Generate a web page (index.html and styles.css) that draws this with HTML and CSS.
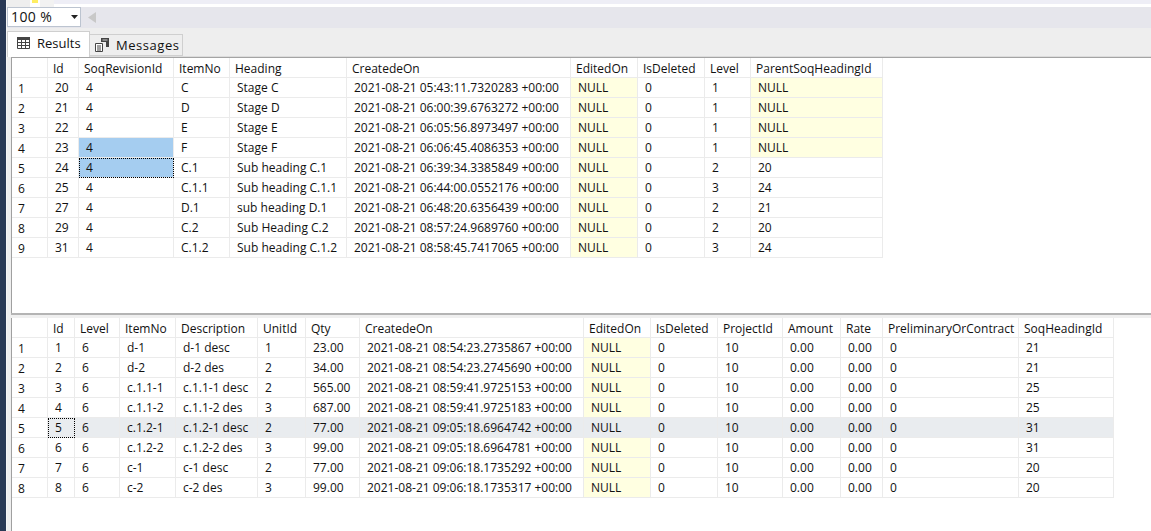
FILE: index.html
```html
<!DOCTYPE html>
<html lang="en">
<head>
  <meta charset="UTF-8">
  <title>Results</title>
  <link rel="stylesheet" href="styles.css">
</head>
<body>
  <div class="side"></div>
  <div class="main">
    <div class="editor-edge">
      <div class="margin-mark"><span class="change-mark"></span></div>
      <div class="margin-gap"></div>
      <div class="editor-text"></div>
    </div>
    <div class="toolbar">
      <div class="zoom-combo">
        <span>100 %</span>
        <svg class="combo-arrow" width="7" height="4" viewBox="0 0 7 4"><path d="M0 0h7L3.500 4z" fill="#222"/></svg>
      </div>
      <svg class="scroll-left" width="8" height="11" viewBox="0 0 8 11"><path d="M8 0v11L0 5.500z" fill="#c8c8c8"/></svg>
    </div>
    <div class="tabs">
      <div class="tab tab-active">
        <svg width="13" height="12" viewBox="0 0 13 12"><path d="M.5.500h12v11H.500z" fill="#fff" stroke="#444"/><path d="M0 0h13v3H0z" fill="#444"/><path d="M.500 5.500h12M.500 8.500h12M4.500 3v8M8.500 3v8" fill="none" stroke="#444"/></svg>
        Results
      </div>
      <div class="tab tab-messages">
        <svg width="15" height="14" viewBox="0 0 15 14"><path d="M6 0h8v9h-3V4H6z" fill="#444"/><path d="M7.500 2h5" stroke="#ccc"/><path d="M.5 5.500h7v8h-7z" fill="#fff" stroke="#444"/><path d="M2 8h4M2 10h4M2 12h4" stroke="#444"/></svg>
        <span>Messages</span>
      </div>
    </div>
    <div class="pane pane-top">
      <table class="grid">
        <colgroup>
          <col class="w36"><col class="w31"><col class="w95"><col class="w56"><col class="w117"><col class="w224"><col class="w67"><col class="w67"><col class="w46"><col class="w132">
        </colgroup>
        <thead>
          <tr><th></th><th>Id</th><th>SoqRevisionId</th><th>ItemNo</th><th>Heading</th><th>CreatedeOn</th><th>EditedOn</th><th>IsDeleted</th><th>Level</th><th>ParentSoqHeadingId</th></tr>
        </thead>
        <tbody>
          <tr><td class="num">1</td><td>20</td><td>4</td><td>C</td><td>Stage C</td><td>2021-08-21 05:43:11.7320283 +00:00</td><td class="null">NULL</td><td>0</td><td>1</td><td class="null">NULL</td></tr>
          <tr><td class="num">2</td><td>21</td><td>4</td><td>D</td><td>Stage D</td><td>2021-08-21 06:00:39.6763272 +00:00</td><td class="null">NULL</td><td>0</td><td>1</td><td class="null">NULL</td></tr>
          <tr><td class="num">3</td><td>22</td><td>4</td><td>E</td><td>Stage E</td><td>2021-08-21 06:05:56.8973497 +00:00</td><td class="null">NULL</td><td>0</td><td>1</td><td class="null">NULL</td></tr>
          <tr><td class="num">4</td><td>23</td><td class="picked">4</td><td>F</td><td>Stage F</td><td>2021-08-21 06:06:45.4086353 +00:00</td><td class="null">NULL</td><td>0</td><td>1</td><td class="null">NULL</td></tr>
          <tr><td class="num">5</td><td>24</td><td class="picked focus">4</td><td>C.1</td><td>Sub heading C.1</td><td>2021-08-21 06:39:34.3385849 +00:00</td><td class="null">NULL</td><td>0</td><td>2</td><td>20</td></tr>
          <tr><td class="num">6</td><td>25</td><td>4</td><td>C.1.1</td><td>Sub heading C.1.1</td><td>2021-08-21 06:44:00.0552176 +00:00</td><td class="null">NULL</td><td>0</td><td>3</td><td>24</td></tr>
          <tr><td class="num">7</td><td>27</td><td>4</td><td>D.1</td><td>sub heading D.1</td><td>2021-08-21 06:48:20.6356439 +00:00</td><td class="null">NULL</td><td>0</td><td>2</td><td>21</td></tr>
          <tr><td class="num">8</td><td>29</td><td>4</td><td>C.2</td><td>Sub Heading C.2</td><td>2021-08-21 08:57:24.9689760 +00:00</td><td class="null">NULL</td><td>0</td><td>2</td><td>20</td></tr>
          <tr><td class="num">9</td><td>31</td><td>4</td><td>C.1.2</td><td>Sub heading C.1.2</td><td>2021-08-21 08:58:45.7417065 +00:00</td><td class="null">NULL</td><td>0</td><td>3</td><td>24</td></tr>
        </tbody>
      </table>
    </div>
    <div class="splitter"></div>
    <div class="pane pane-bottom">
      <table class="grid">
        <colgroup>
          <col class="w36"><col class="w27"><col class="w45"><col class="w56"><col class="w82"><col class="w48"><col class="w54"><col class="w224"><col class="w67"><col class="w67"><col class="w65"><col class="w58"><col class="w42"><col class="w136"><col class="w95">
        </colgroup>
        <thead>
          <tr><th></th><th>Id</th><th>Level</th><th>ItemNo</th><th>Description</th><th>UnitId</th><th>Qty</th><th>CreatedeOn</th><th>EditedOn</th><th>IsDeleted</th><th>ProjectId</th><th>Amount</th><th>Rate</th><th>PreliminaryOrContract</th><th>SoqHeadingId</th></tr>
        </thead>
        <tbody>
          <tr><td class="num">1</td><td>1</td><td>6</td><td>d-1</td><td>d-1 desc</td><td>1</td><td>23.00</td><td>2021-08-21 08:54:23.2735867 +00:00</td><td class="null">NULL</td><td>0</td><td>10</td><td>0.00</td><td>0.00</td><td>0</td><td>21</td></tr>
          <tr><td class="num">2</td><td>2</td><td>6</td><td>d-2</td><td>d-2 des</td><td>2</td><td>34.00</td><td>2021-08-21 08:54:23.2745690 +00:00</td><td class="null">NULL</td><td>0</td><td>10</td><td>0.00</td><td>0.00</td><td>0</td><td>21</td></tr>
          <tr><td class="num">3</td><td>3</td><td>6</td><td>c.1.1-1</td><td>c.1.1-1 desc</td><td>2</td><td>565.00</td><td>2021-08-21 08:59:41.9725153 +00:00</td><td class="null">NULL</td><td>0</td><td>10</td><td>0.00</td><td>0.00</td><td>0</td><td>25</td></tr>
          <tr><td class="num">4</td><td>4</td><td>6</td><td>c.1.1-2</td><td>c.1.1-2 des</td><td>3</td><td>687.00</td><td>2021-08-21 08:59:41.9725183 +00:00</td><td class="null">NULL</td><td>0</td><td>10</td><td>0.00</td><td>0.00</td><td>0</td><td>25</td></tr>
          <tr class="current"><td class="num">5</td><td class="focus">5</td><td>6</td><td>c.1.2-1</td><td>c.1.2-1 desc</td><td>2</td><td>77.00</td><td>2021-08-21 09:05:18.6964742 +00:00</td><td>NULL</td><td>0</td><td>10</td><td>0.00</td><td>0.00</td><td>0</td><td>31</td></tr>
          <tr><td class="num">6</td><td>6</td><td>6</td><td>c.1.2-2</td><td>c.1.2-2 des</td><td>3</td><td>99.00</td><td>2021-08-21 09:05:18.6964781 +00:00</td><td class="null">NULL</td><td>0</td><td>10</td><td>0.00</td><td>0.00</td><td>0</td><td>31</td></tr>
          <tr><td class="num">7</td><td>7</td><td>6</td><td>c-1</td><td>c-1 desc</td><td>2</td><td>77.00</td><td>2021-08-21 09:06:18.1735292 +00:00</td><td class="null">NULL</td><td>0</td><td>10</td><td>0.00</td><td>0.00</td><td>0</td><td>20</td></tr>
          <tr><td class="num">8</td><td>8</td><td>6</td><td>c-2</td><td>c-2 des</td><td>3</td><td>99.00</td><td>2021-08-21 09:06:18.1735317 +00:00</td><td class="null">NULL</td><td>0</td><td>10</td><td>0.00</td><td>0.00</td><td>0</td><td>20</td></tr>
        </tbody>
      </table>
    </div>
  </div>
</body>
</html>
```
FILE: styles.css
```css
html, body {
  height: 100%;
}
body {
  margin: 0;
  display: flex;
  overflow: hidden;
  background: #eeeeee;
  color: #111;
  font-family: "Open Sans", "Noto Sans", sans-serif;
  font-size: 12px;
  line-height: 16px;
}
.side {
  width: 6px;
  flex: none;
  background: #293955;
  border-right: 1px solid #f5f5f5;
}
.main {
  flex: 1;
  min-width: 0;
  display: flex;
  flex-direction: column;
  padding-left: 4px;
}
.editor-edge {
  height: 7px;
  flex: none;
  display: flex;
  margin-left: -4px;
  padding-left: 23px;
}
.margin-mark {
  width: 8px;
  padding-left: 2px;
  background: #fff;
}
.change-mark {
  display: block;
  width: 6px;
  height: 3px;
  background: #ffee62;
}
.margin-gap {
  width: 14px;
  background: #f2f2f2;
}
.editor-text {
  flex: 1;
  background: #fff;
  box-shadow: inset 0 4px 0 #eeeef6;
}
.toolbar {
  height: 21px;
  flex: none;
  display: flex;
  align-items: flex-start;
  gap: 7px;
  margin-left: -4px;
  background: #e6e6ec;
}
.scroll-left {
  margin-top: 5px;
}
.zoom-combo {
  width: 74px;
  height: 20px;
  display: flex;
  align-items: center;
  justify-content: space-between;
  padding: 0 2px 0 3px;
  box-sizing: border-box;
  background: #fff;
  border: 1px solid #bcc4d0;
  font-size: 14px;
  letter-spacing: .4px;
}
.tabs {
  height: 29px;
  flex: none;
  box-sizing: border-box;
  display: flex;
  align-items: flex-end;
  margin-left: -4px;
  border-bottom: 1px solid #dcdcdc;
}
.tab {
  height: 22px;
  display: flex;
  align-items: center;
  gap: 6px;
  box-sizing: border-box;
  border: 1px solid #cfcfcf;
  border-left: none;
  font-size: 13px;
}
.tab-active {
  height: 26px;
  width: 83px;
  padding: 0 0 3px 9px;
  gap: 7px;
  margin-bottom: -1px;
  background: #fff;
  border-left: 1px solid #cfcfcf;
  border-bottom: none;
  position: relative;
}
.tab-messages {
  width: 93px;
  padding-left: 5px;
}
.tab-messages span {
  letter-spacing: .55px;
}
.pane {
  background: #fff;
  border-left: 1px solid #a0a0a0;
}
.pane-top {
  height: 256px;
  flex: none;
  box-sizing: border-box;
  border-top: 1px solid #a4a4a4;
}
.splitter {
  height: 5px;
  flex: none;
  box-sizing: border-box;
  background: #efefef;
  border-top: 2px solid #b4b4b4;
}
.pane-bottom {
  flex: 1;
}
.grid {
  border-collapse: separate;
  border-spacing: 0;
  table-layout: fixed;
  width: 0;
}
.grid th,
.grid td {
  height: 20px;
  padding: 0 0 0 5px;
  box-sizing: border-box;
  border-right: 1px solid #ebebeb;
  border-bottom: 1px solid #ebebeb;
  font-weight: 400;
  text-align: left;
  white-space: nowrap;
  overflow: hidden;
}
.grid th {
  padding-top: 2px;
}
.grid td {
  padding-left: 7px;
}
.grid td.num {
  padding: 2px 0 0 6px;
}
.null {
  background: #ffffe1;
}
.picked {
  background: #a5cdf0;
}
.focus {
  outline: 1px dotted #000;
  outline-offset: -1px;
}
.current td {
  background: #e9ecef;
}
.current td.num {
  background: #fff;
}
.w27 { width: 27px; }
.w31 { width: 31px; }
.w36 { width: 36px; }
.w42 { width: 42px; }
.w45 { width: 45px; }
.w46 { width: 46px; }
.w48 { width: 48px; }
.w54 { width: 54px; }
.w56 { width: 56px; }
.w58 { width: 58px; }
.w65 { width: 65px; }
.w67 { width: 67px; }
.w82 { width: 82px; }
.w95 { width: 95px; }
.w117 { width: 117px; }
.w132 { width: 132px; }
.w136 { width: 136px; }
.w224 { width: 224px; }
```
